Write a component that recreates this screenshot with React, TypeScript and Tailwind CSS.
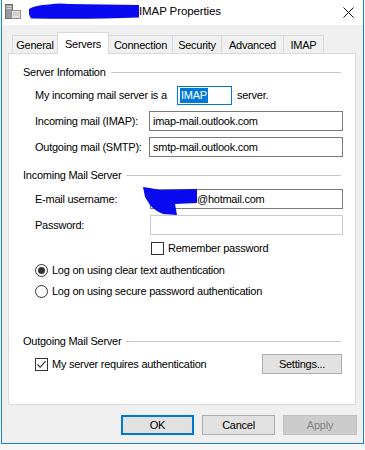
import React from "react";

function Tab({ label, w, selected, first }: { label: string; w: string; selected?: boolean; first?: boolean }) {
  return (
    <div
      className={
        (selected
          ? "h-[22px] -mb-px bg-white relative z-10 border-x border-t border-[#d9d9d9] pt-[1px] "
          : "h-[18px] bg-[#f0f0f0] border-x border-t border-[#d9d9d9] pt-[1px] ") +
        (first ? "" : "-ml-px ") +
        w +
        " flex items-center justify-center text-black"
      }
    >
      {label}
    </div>
  );
}

function Heading({ text }: { text: string }) {
  return (
    <div className="h-[16px] flex items-center pr-[2px]">
      <span>{text}</span>
      <div className="flex-1 h-px bg-[#c8c8c8] ml-[5px] mt-[1px]" />
    </div>
  );
}

function Radio({ checked }: { checked?: boolean }) {
  return (
    <div className="w-[13px] h-[13px] rounded-full border border-[#333333] bg-white flex items-center justify-center">
      {checked && <div className="w-[7px] h-[7px] rounded-full bg-[#333333]" />}
    </div>
  );
}

function Check({ checked }: { checked?: boolean }) {
  return (
    <div className="w-[13px] h-[13px] border border-[#333333] bg-white flex items-center justify-center">
      {checked && (
        <svg width="11" height="11" viewBox="0 0 11 11">
          <path d="M1.5 5.5 L4.2 8.3 L9.6 2.2" fill="none" stroke="#222" strokeWidth="1.1" />
        </svg>
      )}
    </div>
  );
}

export default function App() {
  return (
    <div className="w-[365px] h-[450px] bg-[#f7f7f7] overflow-hidden pl-px font-['Liberation_Sans',Arial,sans-serif] text-[11px] tracking-[-0.25px] text-black leading-none">
      <div className="w-[363px] h-[444px] border-x border-b border-[#1883d7] bg-[#f0f0f0] flex flex-col">
        {/* Title bar */}
        <div className="h-[25px] bg-white flex items-center shrink-0">
          <div className="ml-[3px] w-[16px] h-[16px] mt-[-2px]">
            <svg width="16" height="16" viewBox="0 0 16 16">
              <rect x="0.5" y="0.5" width="7" height="14" fill="#9a9a9a" stroke="#6e6e6e" />
              <rect x="1.5" y="2" width="5" height="1" fill="#d8d8d8" />
              <rect x="1.5" y="4" width="5" height="1" fill="#d8d8d8" />
              <rect x="6.5" y="6.5" width="9" height="8" fill="#e4e1d8" stroke="#8f8f8f" />
              <rect x="8" y="8" width="6" height="4" fill="#cfcfcf" />
            </svg>
          </div>
          <svg width="110" height="25" viewBox="0 0 110 25" className="ml-[8px] shrink-0">
            <path d="M0 9 Q6 5 20 4.5 Q30 3 40 4 L110 5 L110 17.5 Q60 19.5 2 18.5 Q-1 14 0 9 Z" fill="#0a0af0" />
          </svg>
          <span className="text-[11.5px] tracking-[-0.1px] mt-[-1px]">IMAP Properties</span>
          <div className="ml-auto mr-[9px] mt-[-1px]">
            <svg width="11" height="11" viewBox="0 0 11 11">
              <path d="M0.5 0.5 L10.5 10.5 M10.5 0.5 L0.5 10.5" stroke="#111" strokeWidth="1" />
            </svg>
          </div>
        </div>

        {/* Tabs */}
        <div className="mt-[7px] h-[21px] flex items-end pl-[10px] shrink-0">
          <Tab label="General" w="w-[46px]" first />
          <Tab label="Servers" w="w-[52px]" selected />
          <Tab label="Connection" w="w-[65px]" />
          <Tab label="Security" w="w-[50px]" />
          <Tab label="Advanced" w="w-[63px]" />
          <Tab label="IMAP" w="w-[41px]" />
        </div>

        {/* Panel */}
        <div className="ml-[6px] w-[348px] h-[352px] bg-white border border-[#d9d9d9] flex flex-col pl-[14px] pr-[12px] shrink-0">
          <div className="mt-[10px]">
            <Heading text="Server Infomation" />
          </div>
          <div className="pl-[12px] flex flex-col">
            <div className="mt-[6px] h-[19px] flex items-center">
              <span className="w-[142px]">My incoming mail server is a</span>
              <div className="w-[55px] h-[19px] border border-[#0078d7] flex items-center pl-[2px]">
                <span className="bg-[#0078d7] text-white h-[15px] flex items-center px-[1px]">IMAP</span>
              </div>
              <span className="ml-[5px]">server.</span>
            </div>
            <div className="mt-[6px] h-[20px] flex items-center">
              <span className="w-[114px]">Incoming mail (IMAP):</span>
              <div className="flex-1 h-[20px] border border-[#7a7a7a] flex items-center pl-[3px]">imap-mail.outlook.com</div>
            </div>
            <div className="mt-[6px] h-[20px] flex items-center">
              <span className="w-[114px]">Outgoing mail (SMTP):</span>
              <div className="flex-1 h-[20px] border border-[#7a7a7a] flex items-center pl-[3px]">smtp-mail.outlook.com</div>
            </div>
          </div>

          <div className="mt-[10px]">
            <Heading text="Incoming Mail Server" />
          </div>
          <div className="pl-[12px] flex flex-col">
            <div className="mt-[6px] h-[20px] flex items-center relative">
              <span className="w-[115px]">E-mail username:</span>
              <div className="flex-1 h-[20px] border border-[#7a7a7a] flex items-center pl-[46px]">@hotmail.com</div>
              <svg width="56" height="32" viewBox="0 0 56 32" className="absolute left-[108px] top-[-4px]">
                <path d="M0 2 Q8 3 17 5 L54 4 L54 18 L32 19 L34 30 L20 29 Q12 26 7 20 L2 12 Z" fill="#0a0af0" />
              </svg>
            </div>
            <div className="mt-[6px] h-[20px] flex items-center">
              <span className="w-[115px]">Password:</span>
              <div className="flex-1 h-[20px] border border-[#cccccc] bg-white" />
            </div>
            <div className="mt-[7px] h-[13px] flex items-center pl-[116px]">
              <Check />
              <span className="ml-[4px]">Remember password</span>
            </div>
            <div className="mt-[8px] h-[14px] flex items-center">
              <Radio checked />
              <span className="ml-[4px]">Log on using clear text authentication</span>
            </div>
            <div className="mt-[7px] h-[14px] flex items-center">
              <Radio />
              <span className="ml-[4px]">Log on using secure password authentication</span>
            </div>
          </div>

          <div className="mt-[35px]">
            <Heading text="Outgoing Mail Server" />
          </div>
          <div className="pl-[12px] pr-[1px] mt-[5px] h-[20px] flex items-center">
            <Check checked />
            <span className="ml-[4px]">My server requires authentication</span>
            <div className="ml-auto w-[80px] h-[20px] bg-[#e1e1e1] border border-[#adadad] flex items-center justify-center">Settings...</div>
          </div>
        </div>

        {/* Buttons */}
        <div className="mt-[10px] h-[20px] flex justify-end gap-[8px] pr-[6px] shrink-0">
          <div className="w-[73px] h-[20px] bg-[#e1e1e1] border-2 border-[#0078d7] flex items-center justify-center">OK</div>
          <div className="w-[73px] h-[20px] bg-[#e1e1e1] border border-[#adadad] flex items-center justify-center">Cancel</div>
          <div className="w-[74px] h-[20px] bg-[#cccccc] border border-[#bfbfbf] text-[#838383] flex items-center justify-center">Apply</div>
        </div>
      </div>
    </div>
  );
}
